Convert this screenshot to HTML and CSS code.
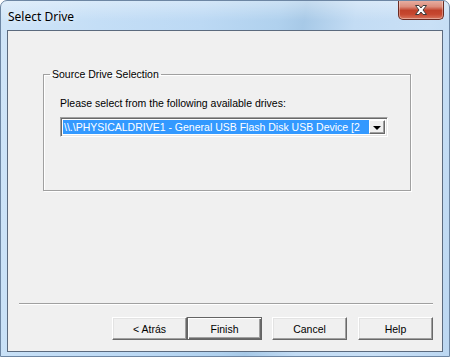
FILE: index.html
```html
<!DOCTYPE html>
<html>
<head>
<meta charset="utf-8">
<link rel="stylesheet" href="styles.css">
</head>
<body>
<div class="window">
  <div class="titlebar">
    <span class="title">Select Drive</span>
    <div class="close">
      <svg width="20" height="12" viewBox="0 0 20 12">
        <path d="M4.5 1.5 L8 1.5 L10 4 L12 1.5 L15.5 1.5 L12 6 L15.5 10.5 L12 10.5 L10 8 L8 10.5 L4.5 10.5 L8 6 Z" fill="#fff" stroke="#3c3c3c" stroke-width="1" stroke-linejoin="round"/>
      </svg>
    </div>
  </div>
  <div class="client">
    <fieldset class="group">
      <legend class="legend">Source Drive Selection</legend>
      <div class="label">Please select from the following available drives:</div>
      <div class="combo">
        <div class="combo-value">\\.\PHYSICALDRIVE1 - General USB Flash Disk USB Device [2</div>
        <div class="combo-btn"><span class="arrow"></span></div>
      </div>
    </fieldset>
    <div class="spacer"></div>
    <div class="separator"></div>
    <div class="buttons">
      <button class="btn">&lt; Atrás</button>
      <button class="btn btn-default">Finish</button>
      <button class="btn btn-gap">Cancel</button>
      <button class="btn btn-gap2">Help</button>
    </div>
  </div>
</div>
</body>
</html>
```

FILE: styles.css
```css
html, body {
  margin: 0;
  padding: 0;
  background: #ffffff;
}
.window {
  width: 450px;
  height: 357px;
  box-sizing: border-box;
  border: 1px solid #6d86a3;
  border-radius: 7px 7px 0 0;
  background:
    linear-gradient(180deg, rgba(255,255,255,0.35) 0px, rgba(255,255,255,0) 20px),
    linear-gradient(100deg, #d0e5f8 0%, #c4def6 20%, #bcd9f4 40%, #b0d1ee 55%, #a7c9e7 60%, #c3dcf4 70%, #c9e0f6 85%, #bcd7f1 100%);
  display: flex;
  flex-direction: column;
  font-family: "Liberation Sans", Arial, sans-serif;
  font-size: 10.5px;
  color: #000;
  overflow: hidden;
}
.titlebar {
  height: 29px;
  position: relative;
  display: flex;
  align-items: flex-start;
}
.title {
  font-family: "Noto Sans", "Open Sans", sans-serif;
  font-size: 12px;
  margin: 7px 0 0 7px;
  color: #000;
  text-shadow: 0 0 6px rgba(255,255,255,0.9);
}
.close {
  position: absolute;
  top: -1px;
  right: 5px;
  width: 44px;
  height: 19px;
  border: 1px solid #6b2b22;
  border-top: none;
  border-radius: 0 0 5px 5px;
  background: linear-gradient(180deg, #e9b3a6 0%, #dc8d7c 35%, #c0412a 55%, #c6472f 75%, #d8755c 100%);
  display: flex;
  align-items: center;
  justify-content: center;
  box-shadow: inset 0 0 0 1px rgba(255,255,255,0.35);
}
.client {
  margin: 0 6px 0 6px;
  height: 322px;
  box-sizing: border-box;
  border: 1px solid #5b6a7e;
  background: #f0f0f0;
  display: flex;
  flex-direction: column;
}
.group {
  margin: 37px 0 0 35px;
  width: 368px;
  height: 123px;
  box-sizing: border-box;
  border: 1px solid #a0a0a0;
  box-shadow: 1px 1px 0 #fff, inset 1px 1px 0 #fff;
  padding: 0 0 0 16px;
  min-width: 0;
}
.legend {
  padding: 0 2px;
  margin-left: -10px;
  line-height: 13px;
}
.label {
  margin-top: 16px;
  line-height: 13px;
}
.combo {
  margin-top: 7px;
  width: 328px;
  height: 20px;
  box-sizing: border-box;
  border: 1px solid;
  border-color: #a0a0a0 #fff #fff #a0a0a0;
  box-shadow: inset 1px 1px 0 #696969, inset -1px -1px 0 #e3e3e3;
  background: #fff;
  display: flex;
  align-items: stretch;
  padding: 2px;
}
.combo-value {
  flex: 1;
  background: #3399ff;
  color: #fff;
  white-space: nowrap;
  overflow: hidden;
  line-height: 14px;
  padding-left: 1px;
}
.combo-btn {
  width: 16px;
  box-sizing: border-box;
  background: #f0f0f0;
  border: 1px solid;
  border-color: #fff #696969 #696969 #fff;
  box-shadow: inset -1px -1px 0 #a0a0a0;
  display: flex;
  align-items: center;
  justify-content: center;
}
.arrow {
  width: 0;
  height: 0;
  border-left: 4px solid transparent;
  border-right: 4px solid transparent;
  border-top: 4px solid #000;
  margin-top: 1px;
}
.spacer {
  flex: 1;
}
.separator {
  margin-left: 11px;
  width: 414px;
  height: 1px;
  background: #a0a0a0;
  border-bottom: 1px solid #fff;
}
.buttons {
  display: flex;
  justify-content: flex-end;
  padding: 12px 9px 11px 0;
}
.btn {
  width: 75px;
  height: 23px;
  box-sizing: border-box;
  margin: 0;
  padding: 0;
  font-family: "Liberation Sans", Arial, sans-serif;
  font-size: 10.5px;
  color: #000;
  background: #f0f0f0;
  border: 1px solid;
  border-color: #fff #696969 #696969 #fff;
  box-shadow: inset -1px -1px 0 #a0a0a0, inset 1px 1px 0 #e3e3e3;
}
.btn-default {
  border: 1px solid #646464;
  box-shadow: inset 1px 1px 0 #fff, inset -1px -1px 0 #696969, inset -2px -2px 0 #a0a0a0;
}
.btn-gap {
  margin-left: 10px;
}
.btn-gap2 {
  margin-left: 11px;
}
```
